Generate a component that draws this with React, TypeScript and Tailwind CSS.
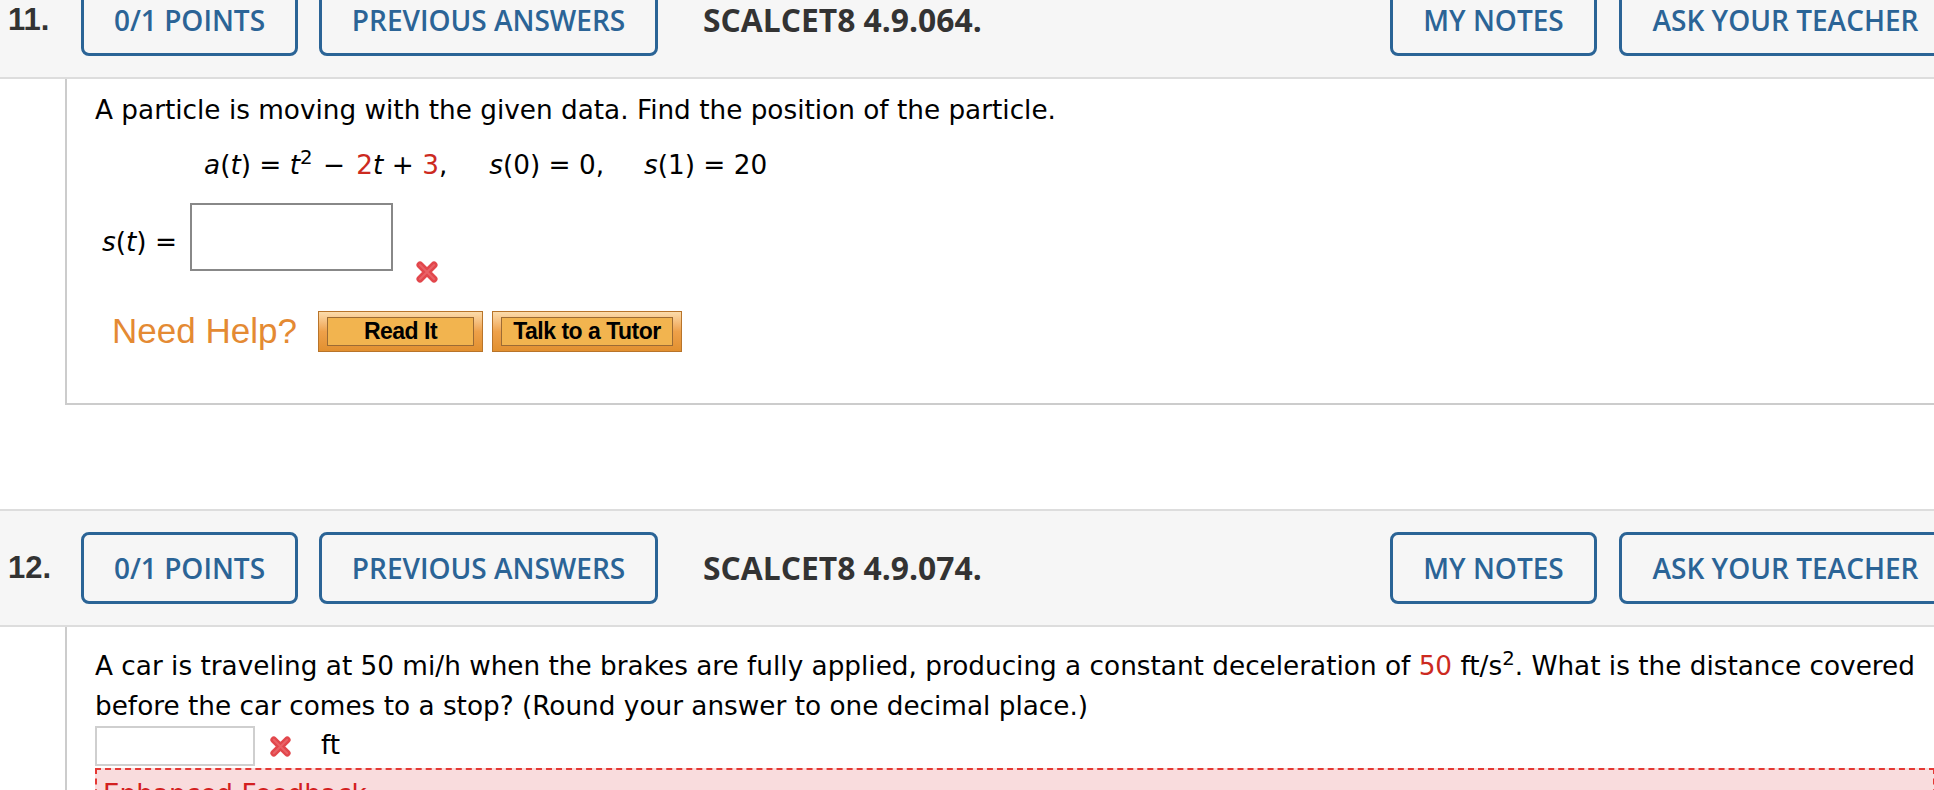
import React from "react";

function HeadBtn({ label, w }: { label: string; w: string }) {
  return (
    <div
      className={`${w} h-[72px] shrink-0 rounded-[8px] border-[3px] border-[#2b6496] flex items-center justify-center text-[28px] font-semibold text-[#2b6496] font-['Open_Sans',sans-serif] whitespace-nowrap`}
    >
      {label}
    </div>
  );
}

function Header({ num, code }: { num: string; code: string }) {
  return (
    <div className="h-[118px] border-y-2 border-[#dddddd] bg-[#f6f6f6] flex items-center">
      <div className="w-[81px] pl-[8px] shrink-0 text-[31px] font-bold text-[#333333] font-['Liberation_Sans',Arial,sans-serif]">
        {num}
      </div>
      <HeadBtn label="0/1 POINTS" w="w-[217px]" />
      <div className="w-[21px] shrink-0" />
      <HeadBtn label="PREVIOUS ANSWERS" w="w-[339px]" />
      <div className="ml-[45px] text-[31.8px] leading-[40px] font-bold text-[#333333] font-['Open_Sans',sans-serif] whitespace-nowrap">
        {code}
      </div>
      <div className="ml-auto flex items-center gap-[22px] pr-[8px]">
        <HeadBtn label="MY NOTES" w="w-[207px]" />
        <HeadBtn label="ASK YOUR TEACHER" w="w-[333px]" />
      </div>
    </div>
  );
}

function RedX({ size }: { size: number }) {
  return (
    <svg width={size} height={size} viewBox="0 0 26 26" className="shrink-0">
      <path d="M6 6 L20 20 M20 6 L6 20" stroke="#e2474c" strokeWidth="7" strokeLinecap="round" />
      <path d="M6 6 L20 20 M20 6 L6 20" stroke="#ef7478" strokeWidth="2" strokeLinecap="round" opacity="0.6" />
    </svg>
  );
}

function HelpBtn({ label, w }: { label: string; w: string }) {
  return (
    <div
      className={`${w} h-[41px] shrink-0 border border-[#b8742a] bg-linear-to-b from-[#fcdcab] via-[#eea14a] to-[#e2902f] px-[8px] py-[5px]`}
    >
      <div className="h-full border border-[#9c6b34] bg-[#f2b44f] flex items-center justify-center text-[23px] font-bold text-black tracking-[-0.5px] font-['Liberation_Sans',Arial,sans-serif]">
        {label}
      </div>
    </div>
  );
}

const body = "font-['DejaVu_Sans',Verdana,sans-serif] text-black";
const red = "text-[#cc2a1f]";

export default function App() {
  return (
    <div className="w-full h-[790px] overflow-hidden bg-white">
      <div className="w-[1960px] -mt-[39px]">
        <Header num="11." code="SCALCET8 4.9.064." />
        <div className={`ml-[65px] h-[326px] border-l-2 border-b-2 border-[#cccccc] pl-[28px] pt-[11px] ${body}`}>
          <p className="text-[26.3px] leading-[40px] whitespace-nowrap">
            A particle is moving with the given data. Find the position of the particle.
          </p>
          <div className="mt-[15px] ml-[109px] text-[26.3px] leading-[40px] whitespace-nowrap">
            <i>a</i>(<i>t</i>) = <i>t</i>
            <sup>2</sup>{" "}
            <span className="ml-[2px] mr-[3px]">−</span>{" "}
            <span className={red}>2</span>
            <i>t</i> + <span className={red}>3</span>,
            <span className="ml-[42px]">
              <i>s</i>(0) = 0,
            </span>
            <span className="ml-[40px]">
              <i>s</i>(1) = 20
            </span>
          </div>
          <div className="mt-[18px] flex items-start">
            <div className="w-[88px] ml-[7px] mt-[19px] text-[26.3px] leading-[40px] whitespace-nowrap">
              <i>s</i>(<i>t</i>) =
            </div>
            <div className="w-[203px] h-[68px] border-2 border-[#888888] bg-white shrink-0" />
            <div className="ml-[21px] mt-[56px]">
              <RedX size={26} />
            </div>
          </div>
          <div className="mt-[26px] flex items-center h-[41px]">
            <div className="w-[223px] pl-[17px] text-[35px] text-[#e48a33] font-['Liberation_Sans',Arial,sans-serif] whitespace-nowrap">
              Need Help?
            </div>
            <HelpBtn label="Read It" w="w-[165px]" />
            <div className="w-[9px] shrink-0" />
            <HelpBtn label="Talk to a Tutor" w="w-[190px]" />
          </div>
        </div>
        <div className="h-[104px]" />
        <Header num="12." code="SCALCET8 4.9.074." />
        <div className={`ml-[65px] h-[200px] border-l-2 border-[#cccccc] pl-[28px] pt-[19px] ${body}`}>
          <p className="text-[26.3px] leading-[40px] whitespace-nowrap">
            A car is traveling at 50 mi/h when the brakes are fully applied, producing a constant deceleration of{" "}
            <span className={red}>50</span> ft/s<sup>2</sup>. What is the distance covered
            <br />
            before the car comes to a stop? (Round your answer to one decimal place.)
          </p>
          <div className="flex items-center h-[40px]">
            <div className="w-[160px] h-[40px] border-2 border-[#cfcfcf] bg-white shrink-0" />
            <div className="ml-[13px]">
              <RedX size={25} />
            </div>
            <div className="ml-[28px] text-[26.3px]">ft</div>
          </div>
          <div className="mt-[2px] w-[1840px] h-[80px] border-2 border-dashed border-[#e53935] bg-[#f9dcdd] pl-[6px] pt-[4px] text-[26.3px] text-[#d32020] leading-[40px]">
            Enhanced Feedback
          </div>
        </div>
      </div>
    </div>
  );
}
